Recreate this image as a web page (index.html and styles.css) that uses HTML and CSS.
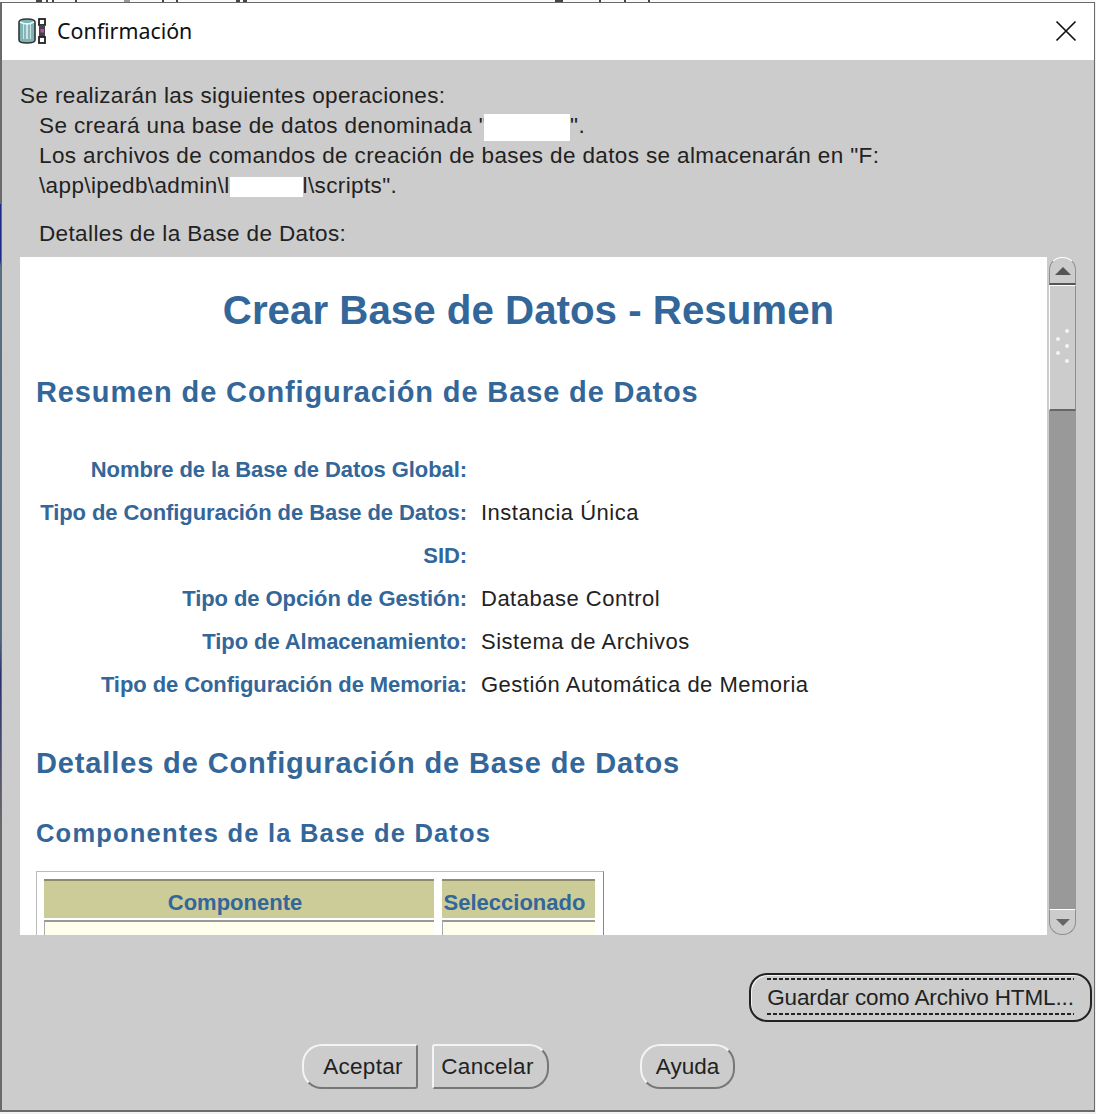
FILE: index.html
```html
<!DOCTYPE html>
<html lang="es">
<head>
  <meta charset="UTF-8">
  <meta name="viewport" content="width=device-width, initial-scale=1.0">
  <title>Confirmación</title>
  <link rel="stylesheet" href="styles.css">
</head>
<body>
  <div class="screen-edge">
    <span class="speck s1"></span>
    <span class="speck s2"></span>
    <span class="speck s3"></span>
    <span class="speck s4"></span>
    <span class="speck s5"></span>
    <span class="speck s6"></span>
    <span class="speck s7"></span>
    <span class="speck s8"></span>
    <span class="speck s9"></span>
    <span class="speck s10"></span>
    <span class="speck s11"></span>
    <span class="speck s12"></span>
    <span class="speck s13"></span>
  </div>
  <div class="desk-strip"></div>

  <div class="window">
    <!-- barra de título -->
    <div class="titlebar">
      <svg class="app-icon" width="32" height="28" viewBox="0 0 32 28">
        <path d="M3 5 Q3 2 11 2 Q19 2 19 5 V23 Q19 26 11 26 Q3 26 3 23 Z" fill="#7fb3b5" stroke="#333" stroke-width="1.6"/>
        <path d="M7 6 H15 V22 H7 Z" fill="#c9e6e6"/>
        <path d="M9 6 V22 M13 6 V22" stroke="#5f9496" stroke-width="1.2"/>
        <path d="M4 5 Q11 9 18 5" fill="none" stroke="#dff" stroke-width="1.5"/>
        <rect x="23" y="2" width="6" height="6" fill="#fff" stroke="#222" stroke-width="1.8"/>
        <rect x="23" y="8" width="6" height="12" fill="#444"/>
        <rect x="24.5" y="12" width="3.5" height="3.5" fill="#d040c0"/>
        <rect x="23" y="20" width="6" height="6" fill="#fff" stroke="#222" stroke-width="1.8"/>
      </svg>
      <span class="title">Confirmación</span>
      <svg class="close" width="22" height="22" viewBox="0 0 22 22">
        <path d="M1.5 1.5 L20.5 20.5 M20.5 1.5 L1.5 20.5" stroke="#111" stroke-width="1.7" fill="none"/>
      </svg>
    </div>

    <div class="content">
      <!-- texto de operaciones -->
      <div class="intro">
        <p>Se realizarán las siguientes operaciones:</p>
        <p class="indent">Se creará una base de datos denominada "<span class="blank blank-name"></span>".</p>
        <p class="indent">Los archivos de comandos de creación de bases de datos se almacenarán en "F:</p>
        <p class="indent">\app\ipedb\admin\l<span class="blank blank-path"></span>l\scripts".</p>
        <p class="indent details-label">Detalles de la Base de Datos:</p>
      </div>

      <div class="report-area">
        <div class="report">
          <h1>Crear Base de Datos - Resumen</h1>
          <h2>Resumen de Configuración de Base de Datos</h2>

          <div class="summary">
            <div class="key">Nombre de la Base de Datos Global:</div>
            <div class="val"></div>
            <div class="key">Tipo de Configuración de Base de Datos:</div>
            <div class="val">Instancia Única</div>
            <div class="key">SID:</div>
            <div class="val"></div>
            <div class="key">Tipo de Opción de Gestión:</div>
            <div class="val">Database Control</div>
            <div class="key">Tipo de Almacenamiento:</div>
            <div class="val">Sistema de Archivos</div>
            <div class="key">Tipo de Configuración de Memoria:</div>
            <div class="val">Gestión Automática de Memoria</div>
          </div>

          <h2 class="details-title">Detalles de Configuración de Base de Datos</h2>
          <h3>Componentes de la Base de Datos</h3>

          <div class="comp-table">
            <div class="comp-head">Componente</div>
            <div class="comp-head">Seleccionado</div>
            <div class="comp-cell"></div>
            <div class="comp-cell"></div>
          </div>
        </div>

        <!-- barra de desplazamiento -->
        <div class="scrollbar">
          <div class="arrow arrow-up"><span class="tri-up"></span></div>
          <div class="thumb">
            <svg width="22" height="42" viewBox="0 0 22 42">
              <g fill="#f4f4f4">
                <circle cx="15" cy="4" r="2"/>
                <circle cx="6" cy="12" r="2"/>
                <circle cx="15" cy="19" r="2"/>
                <circle cx="6" cy="26" r="2"/>
                <circle cx="15" cy="34" r="2"/>
              </g>
            </svg>
          </div>
          <div class="track"></div>
          <div class="arrow arrow-down"><span class="tri-down"></span></div>
        </div>
      </div>

      <div class="save-row">
        <button class="btn btn-save"><span class="focus-lines">Guardar como Archivo HTML...</span></button>
      </div>

      <div class="btn-row">
        <button class="btn btn-left">Aceptar</button>
        <button class="btn btn-right">Cancelar</button>
        <button class="btn btn-help">Ayuda</button>
      </div>
    </div>
  </div>
</body>
</html>
```

FILE: styles.css
```css
* {
  box-sizing: border-box;
}

html, body {
  margin: 0;
  padding: 0;
}

body {
  position: relative;
  width: 1096px;
  height: 1114px;
  overflow: hidden;
  background-color: #f2f2f2;
  font-family: "Liberation Sans", Arial, sans-serif;
  color: #1a1a1a;
}

/* restos del escritorio arriba */
.screen-edge {
  position: relative;
  height: 2px;
  background-color: #fafafa;
}

.speck {
  position: absolute;
  top: 0;
  width: 2px;
  height: 2px;
  background-color: #444;
}

.s1 { left: 36px; width: 6px; }
.s2 { left: 46px; }
.s3 { left: 52px; }
.s4 { left: 75px; }
.s5 { left: 124px; width: 6px; background-color: #999; }
.s6 { left: 162px; }
.s7 { left: 176px; }
.s8 { left: 236px; width: 4px; }
.s9 { left: 243px; width: 4px; }
.s10 { left: 555px; width: 8px; }
.s11 { left: 599px; }
.s12 { left: 624px; }
.s13 { left: 648px; }

/* lo que se ve del fondo en el borde izquierdo */
.desk-strip {
  position: absolute;
  left: 0;
  top: 204px;
  width: 1px;
  height: 620px;
  background: linear-gradient(#1c2a8c 0, #1c2a8c 9%, #5a6f80 10%, #51677a 70%, #2a2f70 76%, #6a6a6a 100%);
}

/* ventana */
.window {
  height: 1110px;
  margin-right: 1px;
  border: 1px solid #6a6a6a;
  border-width: 1px 1px 2px 2px;
  background-color: #cccccc;
  display: flex;
  flex-direction: column;
}

.titlebar {
  height: 57px;
  flex-shrink: 0;
  background-color: #fff;
  display: flex;
  align-items: center;
  padding: 0 17px 2px 14px;
}

.app-icon {
  margin-right: 9px;
}

.title {
  font-family: "Noto Sans", "Liberation Sans", sans-serif;
  font-size: 21.4px;
  color: #111;
}

.close {
  margin-left: auto;
}

.content {
  flex: 1;
  display: flex;
  flex-direction: column;
  padding: 21px 0 0 18px;
}

/* texto de arriba */
.intro {
  font-size: 22.5px;
  line-height: 30px;
  letter-spacing: 0.37px;
  color: #222;
}

.intro p {
  margin: 0;
}

.indent {
  padding-left: 19px;
}

.details-label {
  margin-top: 18px !important;
}

.blank {
  display: inline-block;
  background-color: #fff;
  vertical-align: middle;
}

.blank-name {
  width: 86px;
  height: 27px;
  margin-left: -3px;
}

.blank-path {
  width: 73px;
  height: 20px;
}

/* área del resumen */
.report-area {
  display: flex;
  height: 678px;
  margin-top: 8px;
}

.report {
  width: 1027px;
  background-color: #fff;
  padding: 0 0 0 16px;
  overflow: hidden;
  color: #336699;
}

h1 {
  margin: 30px 0 0 0;
  padding-right: 26px;
  font-size: 40.3px;
  line-height: 48px;
  text-align: center;
  font-weight: bold;
}

h2 {
  margin: 38px 0 0 0;
  font-size: 29px;
  line-height: 38px;
  letter-spacing: 0.87px;
  font-weight: bold;
}

h3 {
  margin: 34px 0 0 0;
  font-size: 25.5px;
  line-height: 34px;
  letter-spacing: 1.2px;
  font-weight: bold;
}

.summary {
  display: grid;
  grid-template-columns: 431px 1fr;
  column-gap: 14px;
  grid-auto-rows: 43px;
  margin-top: 37px;
  font-size: 22px;
  line-height: 43px;
}

.key {
  text-align: right;
  font-weight: bold;
  letter-spacing: -0.08px;
}

.val {
  color: #222;
  letter-spacing: 0.5px;
}

.details-title {
  margin-top: 38px;
}

/* tabla de componentes */
.comp-table {
  display: grid;
  grid-template-columns: 390px 153px;
  column-gap: 8px;
  grid-auto-rows: min-content;
  width: 568px;
  margin-top: 21px;
  padding: 7px 8px 0 7px;
  border: 1px solid #bbb;
  border-right-color: #888;
  border-bottom: 0;
}

.comp-head {
  height: 39px;
  padding-right: 8px;
  background-color: #cccc99;
  border-top: 2px solid #8c8c6c;
  font-size: 22px;
  font-weight: bold;
  line-height: 44px;
  text-align: center;
  white-space: nowrap;
}

.comp-cell {
  height: 60px;
  margin-top: 2px;
  background-color: #ffffee;
  border-top: 2px solid #999;
  border-left: 1px solid #aaa;
}

/* barra de desplazamiento */
.scrollbar {
  width: 27px;
  margin-left: 2px;
  display: flex;
  flex-direction: column;
}

.arrow {
  height: 28px;
  background-color: #ccc;
  display: flex;
  align-items: center;
  justify-content: center;
  border: 1px solid #8e8e8e;
  flex-shrink: 0;
}

.arrow-up {
  border-radius: 13px 13px 0 0;
  border-top-color: #fff;
  border-bottom: 2px solid #555;
}

.arrow-down {
  height: 26px;
  border-radius: 0 0 13px 13px;
  border-top-color: #fff;
}

.tri-up {
  width: 0;
  height: 0;
  border-left: 8px solid transparent;
  border-right: 8px solid transparent;
  border-bottom: 8px solid #555;
}

.tri-down {
  width: 0;
  height: 0;
  border-left: 7px solid transparent;
  border-right: 7px solid transparent;
  border-top: 7px solid #666;
}

.thumb {
  height: 126px;
  background-color: #ccc;
  border: 1px solid #8e8e8e;
  border-top-color: #fff;
  border-left-color: #fff;
  border-bottom: 2px solid #666;
  display: flex;
  align-items: center;
  justify-content: center;
  flex-shrink: 0;
}

.track {
  flex: 1;
  background-color: #999;
}

/* botones */
.btn {
  font-family: "Liberation Sans", Arial, sans-serif;
  font-size: 22.5px;
  letter-spacing: 0.3px;
  color: #222;
  background-color: #ccc;
  border: 2px solid;
  border-color: #f4f4f4 #777 #777 #f4f4f4;
  padding: 0;
  height: 45px;
}

.save-row {
  display: flex;
  justify-content: flex-end;
  margin-top: 38px;
  padding-right: 2px;
}

.btn-save {
  width: 343px;
  height: 49px;
  border: 2px solid #222;
  border-radius: 18px;
  padding: 2px 16px 4px;
  letter-spacing: -0.12px;
  box-shadow: inset 1px 1px 0 #f4f4f4;
}

.focus-lines {
  display: block;
  height: 37px;
  line-height: 40px;
  white-space: nowrap;
  background:
    repeating-linear-gradient(90deg, #222 0, #222 4px, transparent 4px, transparent 6px) top / 100% 2px no-repeat,
    repeating-linear-gradient(90deg, #222 0, #222 4px, transparent 4px, transparent 6px) bottom / 100% 2px no-repeat;
}

.btn-row {
  display: flex;
  margin-top: 22px;
  padding-left: 282px;
}

.btn-left {
  width: 116px;
  border-radius: 20px 3px 3px 20px;
  padding-left: 6px;
}

.btn-right {
  width: 117px;
  margin-left: 14px;
  border-radius: 3px 20px 20px 3px;
  padding-right: 6px;
}

.btn-help {
  width: 95px;
  margin-left: 91px;
  border-radius: 20px;
  letter-spacing: 0;
}
```
